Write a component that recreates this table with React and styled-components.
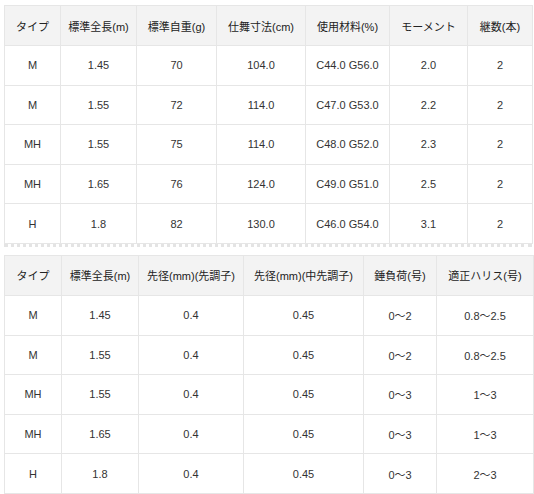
import React from 'react';
import styled, { createGlobalStyle } from 'styled-components';

const GlobalStyle = createGlobalStyle`
  body {
    margin: 0;
    background: #fff;
    font-family: "Liberation Sans", Arial, "Noto Sans CJK JP", sans-serif;
    color: #333;
  }
`;

const Page = styled.div`
  padding: 5px 2px 0 4px;
  display: flex;
  flex-direction: column;
  gap: 8px;
`;

const Scroller = styled.div`
  border-bottom: 3px dotted #e4e4e4;
  width: ${p => p.$w}px;
`;

const Table = styled.table`
  border-collapse: collapse;
  table-layout: fixed;
  width: 100%;
  font-size: 11px;
`;

const Th = styled.th`
  background: #f3f3f3;
  border: 1px solid #e6e6e6;
  height: 39px;
  font-weight: normal;
  color: #222;
  text-align: center;
  padding: 0 2px;
  white-space: nowrap;
`;

const Td = styled.td`
  border: 1px solid #e6e6e6;
  height: 38.6px;
  text-align: center;
  padding: 0 2px;
  white-space: nowrap;
`;

const specs = {
  width: 528,
  cols: [56, 76, 80, 89, 84, 78, 65],
  head: ['タイプ', '標準全長(m)', '標準自重(g)', '仕舞寸法(cm)', '使用材料(%)', 'モーメント', '継数(本)'],
  rows: [
    ['M', '1.45', '70', '104.0', 'C44.0 G56.0', '2.0', '2'],
    ['M', '1.55', '72', '114.0', 'C47.0 G53.0', '2.2', '2'],
    ['MH', '1.55', '75', '114.0', 'C48.0 G52.0', '2.3', '2'],
    ['MH', '1.65', '76', '124.0', 'C49.0 G51.0', '2.5', '2'],
    ['H', '1.8', '82', '130.0', 'C46.0 G54.0', '3.1', '2'],
  ],
};

const tips = {
  width: 529,
  cols: [57, 77, 105, 120, 73, 97],
  head: ['タイプ', '標準全長(m)', '先径(mm)(先調子)', '先径(mm)(中先調子)', '錘負荷(号)', '適正ハリス(号)'],
  rows: [
    ['M', '1.45', '0.4', '0.45', '0〜2', '0.8〜2.5'],
    ['M', '1.55', '0.4', '0.45', '0〜2', '0.8〜2.5'],
    ['MH', '1.55', '0.4', '0.45', '0〜3', '1〜3'],
    ['MH', '1.65', '0.4', '0.45', '0〜3', '1〜3'],
    ['H', '1.8', '0.4', '0.45', '0〜3', '2〜3'],
  ],
};

function SpecTable({ data }) {
  return (
    <Scroller $w={data.width}>
      <Table>
        <colgroup>
          {data.cols.map((w, i) => <col key={i} style={{ width: w }} />)}
        </colgroup>
        <thead>
          <tr>{data.head.map(h => <Th key={h}>{h}</Th>)}</tr>
        </thead>
        <tbody>
          {data.rows.map((r, i) => (
            <tr key={i}>{r.map((c, j) => <Td key={j}>{c}</Td>)}</tr>
          ))}
        </tbody>
      </Table>
    </Scroller>
  );
}

export default function App() {
  return (
    <>
      <GlobalStyle />
      <Page>
        <SpecTable data={specs} />
        <SpecTable data={tips} />
      </Page>
    </>
  );
}
